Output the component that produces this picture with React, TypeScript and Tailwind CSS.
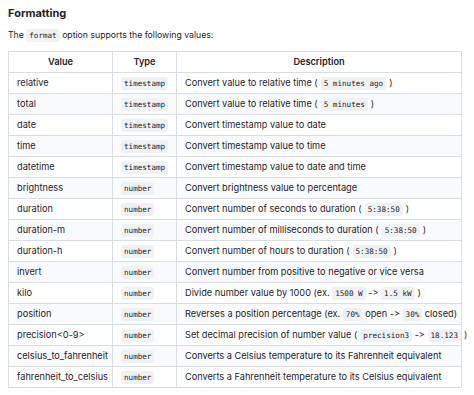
import React from "react";

type Part = string | { c: string };
const rows: [string, string, Part[]][] = [
  ["relative", "timestamp", ["Convert value to relative time (", { c: "5 minutes ago" }, ")"]],
  ["total", "timestamp", ["Convert value to relative time (", { c: "5 minutes" }, ")"]],
  ["date", "timestamp", ["Convert timestamp value to date"]],
  ["time", "timestamp", ["Convert timestamp value to time"]],
  ["datetime", "timestamp", ["Convert timestamp value to date and time"]],
  ["brightness", "number", ["Convert brightness value to percentage"]],
  ["duration", "number", ["Convert number of seconds to duration (", { c: "5:38:50" }, ")"]],
  ["duration-m", "number", ["Convert number of milliseconds to duration (", { c: "5:38:50" }, ")"]],
  ["duration-h", "number", ["Convert number of hours to duration (", { c: "5:38:50" }, ")"]],
  ["invert", "number", ["Convert number from positive to negative or vice versa"]],
  ["kilo", "number", ["Divide number value by 1000 (ex. ", { c: "1500 W" }, " -> ", { c: "1.5 kW" }, ")"]],
  ["position", "number", ["Reverses a position percentage (ex. ", { c: "70%" }, " open -> ", { c: "30%" }, " closed)"]],
  ["precision<0-9>", "number", ["Set decimal precision of number value (", { c: "precision3" }, " -> ", { c: "18.123" }, ")"]],
  ["celsius_to_fahrenheit", "number", ["Converts a Celsius temperature to its Fahrenheit equivalent"]],
  ["fahrenheit_to_celsius", "number", ["Converts a Fahrenheit temperature to its Celsius equivalent"]],
];

function Code({ children, ml, mr }: { children: React.ReactNode; ml?: boolean; mr?: boolean }) {
  return (
    <code
      className={`rounded-[3px] bg-[#eff1f3] px-[3px] py-[2px] text-[7.6px] leading-none text-[#1f2328] [font-family:'DejaVu_Sans_Mono','Liberation_Mono',monospace] ${
        ml ? "ml-[3px]" : ""
      } ${mr ? "mr-[3px]" : ""}`}
    >
      {children}
    </code>
  );
}

const cell = "border border-[#d8dee4] px-2 py-[3px] leading-[14px]";

export default function App() {
  return (
    <div className="min-h-[395px] w-[474px] bg-white px-2 pt-[6px] text-[#1f2328] [font-family:Inter,'Liberation_Sans',sans-serif] [font-feature-settings:'calt'_0,'liga'_0] [font-variant-ligatures:none]">
      <h3 className="text-[11px] font-bold leading-[14px]">Formatting</h3>
      <p className="mt-[8px] text-[8.7px] leading-[14px]">
        The <Code>format</Code> option supports the following values:
      </p>
      <table className="mt-[9px] w-[453px] table-fixed border-collapse text-[9.2px]">
        <colgroup>
          <col className="w-[104px]" />
          <col className="w-[64px]" />
          <col className="w-[285px]" />
        </colgroup>
        <thead>
          <tr className="bg-white">
            <th className={`${cell} text-center font-semibold`}>Value</th>
            <th className={`${cell} text-center font-semibold`}>Type</th>
            <th className={`${cell} text-center font-semibold`}>Description</th>
          </tr>
        </thead>
        <tbody>
          {rows.map(([v, t, d], i) => (
            <tr key={v} className={i % 2 === 1 ? "bg-[#f9fafb]" : "bg-white"}>
              <td className={`${cell} whitespace-nowrap`}>{v}</td>
              <td className={`${cell} whitespace-nowrap`}>
                <Code>{t}</Code>
              </td>
              <td className={`${cell} whitespace-pre`}>
                {d.map((p, j) => {
                  if (typeof p === "string") return <React.Fragment key={j}>{p}</React.Fragment>;
                  const prev = d[j - 1];
                  const next = d[j + 1];
                  return (
                    <Code
                      key={j}
                      ml={typeof prev === "string" && prev.endsWith("(")}
                      mr={typeof next === "string" && next.startsWith(")")}
                    >
                      {p.c}
                    </Code>
                  );
                })}
              </td>
            </tr>
          ))}
        </tbody>
      </table>
    </div>
  );
}
